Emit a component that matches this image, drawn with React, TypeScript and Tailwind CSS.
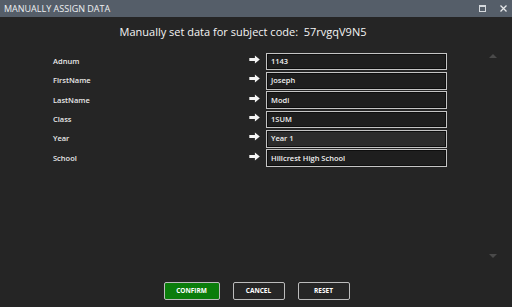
import React from 'react';

const fields = [
  { label: 'Adnum', value: '1143' },
  { label: 'FirstName', value: 'Joseph' },
  { label: 'LastName', value: 'Modi' },
  { label: 'Class', value: '1SUM' },
  { label: 'Year', value: 'Year 1', shaded: true },
  { label: 'School', value: 'Hillcrest High School' },
];

function Arrow() {
  return (
    <svg width="11" height="9" viewBox="0 0 11 9" className="block">
      <path d="M0.3 3.1h5.6V0.6L10.8 4.5 5.9 8.4V5.9H0.3z" fill="#f4f4f4" />
    </svg>
  );
}

export default function App() {
  return (
    <div
      className="w-[512px] h-[307px] flex flex-col bg-[#252525] text-white overflow-hidden"
      style={{ fontFamily: '"Open Sans", "Noto Sans", sans-serif' }}
    >
      <div className="h-[17px] bg-[#555e69] flex items-center pl-[4px] pr-[5px]">
        <span className="text-[9px] text-[#eef0f2] leading-none">MANUALLY ASSIGN DATA</span>
        <div className="ml-auto flex items-center gap-[14px]">
          <svg width="7" height="7" viewBox="0 0 7 7">
            <rect x="0.5" y="0.5" width="6" height="6" fill="none" stroke="#d4d8dc" strokeWidth="1" />
            <rect x="0.5" y="0.5" width="6" height="1.5" fill="#d4d8dc" />
          </svg>
          <svg width="7" height="7" viewBox="0 0 7 7">
            <path d="M0.5 0.5L6.5 6.5M6.5 0.5L0.5 6.5" stroke="#e6e8ea" strokeWidth="1.3" />
          </svg>
        </div>
      </div>

      <div className="flex-1 flex">
        <div className="flex-1 flex flex-col">
          <div className="h-[24px] mt-[3px] flex items-center justify-center pl-[12px] text-[11px] text-[#f4f4f4]">
            Manually set data for subject code:&nbsp;&nbsp;57rvgqV9N5
          </div>
          <div className="mt-[8px] flex flex-col">
            {fields.map((f) => (
              <div key={f.label} className="h-[19.3px] flex items-center">
                <div className="w-[242px] pl-[53px] text-[7.5px] font-semibold text-[#e8e8e8]">{f.label}</div>
                <div className="w-[24px] flex justify-center -mt-[4px]">
                  <Arrow />
                </div>
                <div
                  className={`w-[181px] h-[17.5px] border border-[#c4c4c4] shadow-[inset_0_0_0_1px_#0e0e0e] flex items-center px-[4px] text-[7.5px] font-semibold text-[#f0f0f0] ${
                    f.shaded ? 'bg-[#2c2c2c]' : 'bg-[#1e1e1e]'
                  }`}
                >
                  {f.value}
                </div>
              </div>
            ))}
          </div>
          <div className="mt-auto mb-[7px] flex justify-center gap-[13px] pl-[39px]">
            <button className="w-[56px] h-[18px] bg-[#0b7d0b] border border-[#bcbcbc] rounded-[2px] text-[6.5px] font-bold text-white">
              CONFIRM
            </button>
            <button className="w-[52px] h-[18px] bg-[#262626] border border-[#bcbcbc] rounded-[2px] text-[6.5px] font-bold text-white">
              CANCEL
            </button>
            <button className="w-[52px] h-[18px] bg-[#262626] border border-[#bcbcbc] rounded-[2px] text-[6.5px] font-bold text-white">
              RESET
            </button>
          </div>
        </div>
        <div className="w-[38px] flex flex-col items-center pt-[37px] pb-[49px] justify-between pr-[1px]">
          <div className="w-0 h-0 border-l-[4px] border-r-[4px] border-b-[4px] border-l-transparent border-r-transparent border-b-[#4a4a4a]" />
          <div className="w-0 h-0 border-l-[4px] border-r-[4px] border-t-[4px] border-l-transparent border-r-transparent border-t-[#4a4a4a]" />
        </div>
      </div>
    </div>
  );
}
